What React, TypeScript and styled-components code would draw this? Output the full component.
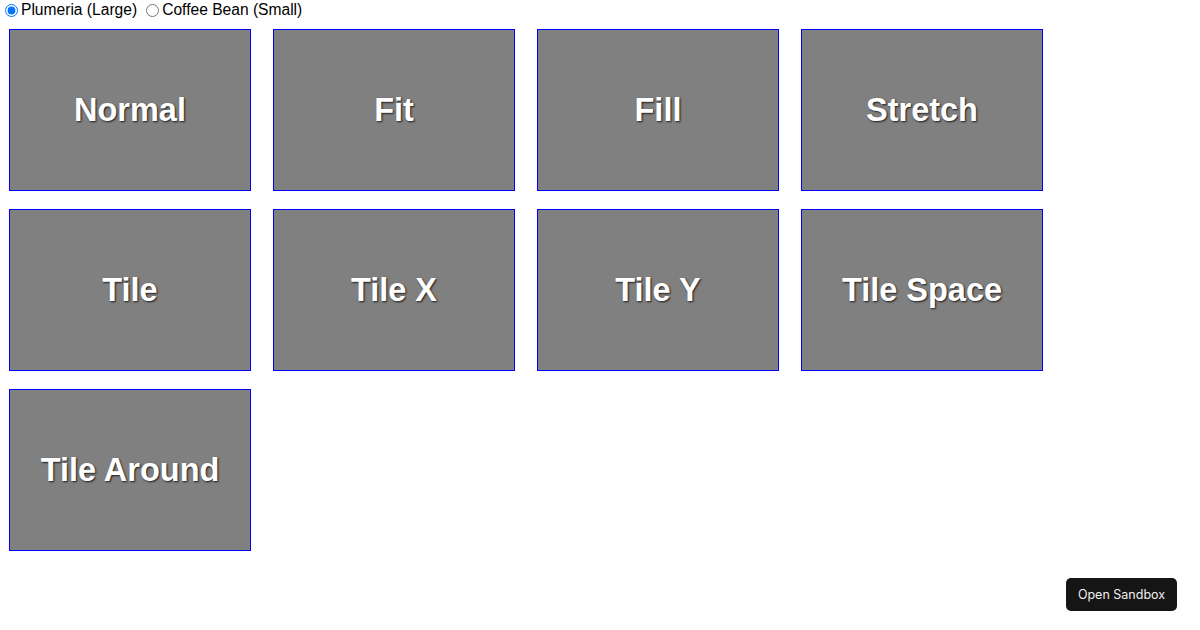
import React, { useState } from 'react';
import styled, { createGlobalStyle } from 'styled-components';

const GlobalStyle = createGlobalStyle`
	body {
		margin: 0;
		font-family: "Liberation Sans", Arial, sans-serif;
		background: #fff;
	}
`;

const Options = styled.div`
	height: 20px;
	font-size: 15.6px;
	color: #000;
	display: flex;
	align-items: center;
`;

const Option = styled.label`
	display: inline-flex;
	align-items: center;
	margin-right: 4px;

	& > input {
		margin: 0 3px 0 5px;
		width: 13px;
		height: 13px;
	}
`;

const Grid = styled.div`
	display: grid;
	grid-template-columns: repeat(4, 242px);
	gap: 18px 22px;
	padding: 9px;
`;

const Tile = styled.div`
	box-sizing: border-box;
	width: 242px;
	height: 162px;
	border: 1px solid #0000ff;
	background: #808080;
	display: flex;
	align-items: center;
	justify-content: center;
	color: #fff;
	font-size: 32.5px;
	font-weight: bold;
	text-shadow: 1px 1px 2px rgba(0, 0, 0, 0.8);
`;

const SandboxButton = styled.button`
	position: fixed;
	right: 23px;
	bottom: 19px;
	width: 111px;
	height: 33px;
	border: none;
	border-radius: 5px;
	background: #151515;
	color: #f0f0f0;
	font-family: Inter, "Liberation Sans", sans-serif;
	font-size: 12.5px;
	cursor: pointer;
`;

const modes = ['Normal', 'Fit', 'Fill', 'Stretch', 'Tile', 'Tile X', 'Tile Y', 'Tile Space', 'Tile Around'];

const App: React.FC = () => {
	const [image, setImage] = useState('large');
	return (
		<>
			<GlobalStyle />
			<Options>
				<Option>
					<input type="radio" name="image" checked={ image === 'large' } onChange={ () => setImage('large') } />
					Plumeria (Large)
				</Option>
				<Option>
					<input type="radio" name="image" checked={ image === 'small' } onChange={ () => setImage('small') } />
					Coffee Bean (Small)
				</Option>
			</Options>
			<Grid>
				{ modes.map(mode => <Tile key={ mode }>{ mode }</Tile>) }
			</Grid>
			<SandboxButton>Open Sandbox</SandboxButton>
		</>
	);
};

export default App;
